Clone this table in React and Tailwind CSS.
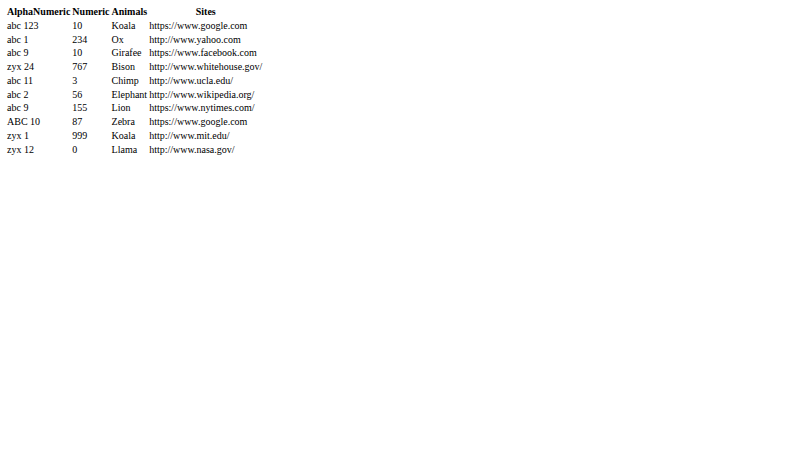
const rows = [
  ["abc 123", "10", "Koala", "https://www.google.com"],
  ["abc 1", "234", "Ox", "http://www.yahoo.com"],
  ["abc 9", "10", "Girafee", "https://www.facebook.com"],
  ["zyx 24", "767", "Bison", "http://www.whitehouse.gov/"],
  ["abc 11", "3", "Chimp", "http://www.ucla.edu/"],
  ["abc 2", "56", "Elephant", "http://www.wikipedia.org/"],
  ["abc 9", "155", "Lion", "https://www.nytimes.com/"],
  ["ABC 10", "87", "Zebra", "https://www.google.com"],
  ["zyx 1", "999", "Koala", "http://www.mit.edu/"],
  ["zyx 12", "0", "Llama", "http://www.nasa.gov/"],
];

export default function App() {
  return (
    <div className="min-h-[450px] bg-white pl-[6px] pt-[5px] font-['Liberation_Serif',serif] text-[10px] text-black">
      <table className="border-collapse">
        <thead>
          <tr className="leading-[13.75px]">
            <th className="px-[1px] py-0 text-left font-bold">AlphaNumeric</th>
            <th className="px-[1px] py-0 text-left font-bold">Numeric</th>
            <th className="px-[1px] py-0 text-left font-bold">Animals</th>
            <th className="px-[1px] py-0 text-center font-bold">Sites</th>
          </tr>
        </thead>
        <tbody>
          {rows.map((r, i) => (
            <tr key={i} className="leading-[13.75px]">
              {r.map((c, j) => (
                <td key={j} className="px-[1px] py-0">{c}</td>
              ))}
            </tr>
          ))}
        </tbody>
      </table>
    </div>
  );
}
